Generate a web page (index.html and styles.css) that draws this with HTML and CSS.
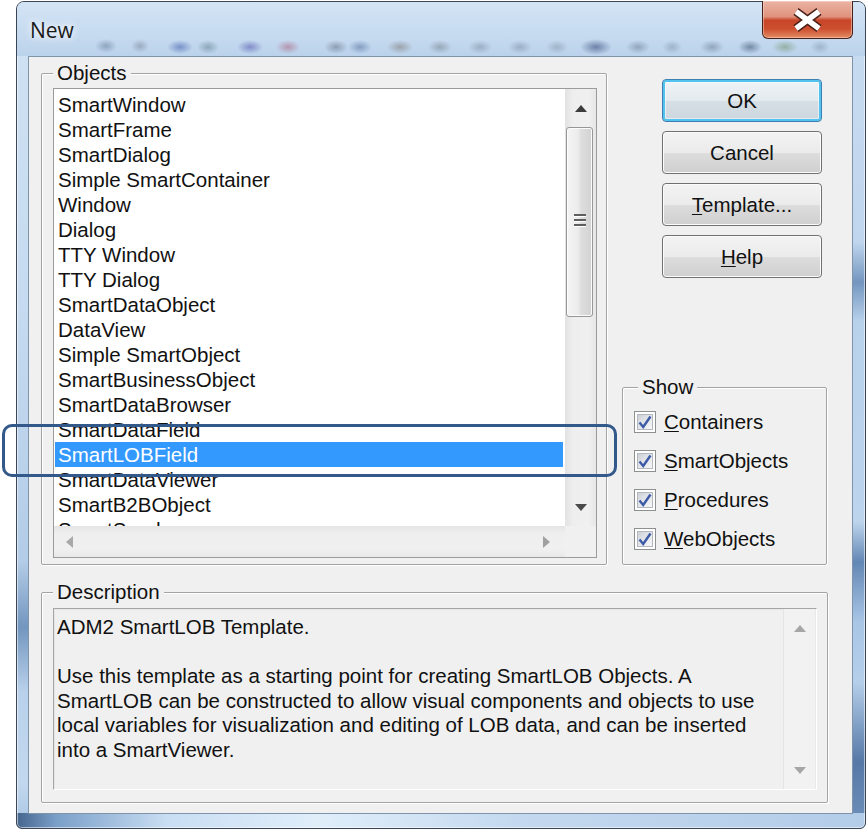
FILE: index.html
```html
<!DOCTYPE html>
<html>
<head>
<meta charset="utf-8">
<title>New</title>
<link rel="stylesheet" href="styles.css">
</head>
<body>
<div class="annot"></div>
<div class="window">
  <div class="titlebar">
    <span class="title">New</span>
    <div class="close">
      <svg width="89" height="37" viewBox="0 0 89 37">
        <path d="M33 10.5 L56 27.5 M56 10.5 L33 27.5" stroke="#4a2018" stroke-width="8.5" fill="none"/>
        <path d="M33 10.5 L56 27.5 M56 10.5 L33 27.5" stroke="#ffffff" stroke-width="5.5" fill="none"/>
      </svg>
    </div>
  </div>
  <div class="client">
    <div class="top">
      <div class="group objects">
        <div class="glabel">Objects</div>
        <div class="listbox">
          <ul class="items">
            <li>SmartWindow</li>
            <li>SmartFrame</li>
            <li>SmartDialog</li>
            <li>Simple SmartContainer</li>
            <li>Window</li>
            <li>Dialog</li>
            <li>TTY Window</li>
            <li>TTY Dialog</li>
            <li>SmartDataObject</li>
            <li>DataView</li>
            <li>Simple SmartObject</li>
            <li>SmartBusinessObject</li>
            <li>SmartDataBrowser</li>
            <li>SmartDataField</li>
            <li class="sel">SmartLOBField</li>
            <li>SmartDataViewer</li>
            <li>SmartB2BObject</li>
            <li>SmartSender</li>
          </ul>
          <div class="vscroll">
            <div class="varrow"><svg width="12" height="7" viewBox="0 0 12 7"><polygon points="0,7 6,0 12,7" fill="#3c3c3c"/></svg></div>
            <div class="thumb">
              <svg width="12" height="13" viewBox="0 0 12 13">
                <rect x="0" y="0" width="12" height="2" fill="#5e5e5e"/>
                <rect x="0" y="2" width="12" height="1" fill="#ffffff"/>
                <rect x="0" y="5" width="12" height="2" fill="#5e5e5e"/>
                <rect x="0" y="7" width="12" height="1" fill="#ffffff"/>
                <rect x="0" y="10" width="12" height="2" fill="#5e5e5e"/>
                <rect x="0" y="12" width="12" height="1" fill="#ffffff"/>
              </svg>
            </div>
            <div class="spacer"></div>
            <div class="varrow"><svg width="12" height="7" viewBox="0 0 12 7"><polygon points="0,0 12,0 6,7" fill="#4a4a4a"/></svg></div>
          </div>
          <div class="hscroll">
            <div class="harrow left"><svg width="7" height="12" viewBox="0 0 7 12"><polygon points="7,0 7,12 0,6" fill="#a8a8a8"/></svg></div>
            <div class="harrow right"><svg width="7" height="12" viewBox="0 0 7 12"><polygon points="0,0 7,6 0,12" fill="#a0a0a0"/></svg></div>
          </div>
          <div class="corner"></div>
        </div>
      </div>
      <div class="side">
        <div class="buttons">
          <div class="btn default">OK</div>
          <div class="btn">Cancel</div>
          <div class="btn"><span><u>T</u>emplate...</span></div>
          <div class="btn"><span><u>H</u>elp</span></div>
        </div>
        <div class="group show">
          <div class="glabel">Show</div>
          <div class="checks">
            <div class="check"><span class="box"><svg width="14" height="14" viewBox="0 0 14 14"><path d="M1.5 7.5 L5.2 12 L12.5 1.5" stroke="#3c5aa5" stroke-width="2.4" fill="none"/></svg></span><span><u>C</u>ontainers</span></div>
            <div class="check"><span class="box"><svg width="14" height="14" viewBox="0 0 14 14"><path d="M1.5 7.5 L5.2 12 L12.5 1.5" stroke="#3c5aa5" stroke-width="2.4" fill="none"/></svg></span><span><u>S</u>martObjects</span></div>
            <div class="check"><span class="box"><svg width="14" height="14" viewBox="0 0 14 14"><path d="M1.5 7.5 L5.2 12 L12.5 1.5" stroke="#3c5aa5" stroke-width="2.4" fill="none"/></svg></span><span><u>P</u>rocedures</span></div>
            <div class="check"><span class="box"><svg width="14" height="14" viewBox="0 0 14 14"><path d="M1.5 7.5 L5.2 12 L12.5 1.5" stroke="#3c5aa5" stroke-width="2.4" fill="none"/></svg></span><span><u>W</u>ebObjects</span></div>
          </div>
        </div>
      </div>
    </div>
    <div class="group desc">
      <div class="glabel">Description</div>
      <div class="textarea">
        <div class="dtext">ADM2 SmartLOB Template.<br><br>Use this template as a starting point for creating SmartLOB Objects. A<br>SmartLOB can be constructed to allow visual components and objects to use<br>local variables for visualization and editing of LOB data, and can be inserted<br>into a SmartViewer.</div>
        <div class="dscroll">
          <div class="varrow"><svg width="12" height="7" viewBox="0 0 12 7"><polygon points="0,7 6,0 12,7" fill="#a6a6a6"/></svg></div>
          <div class="varrow"><svg width="12" height="7" viewBox="0 0 12 7"><polygon points="0,0 12,0 6,7" fill="#a6a6a6"/></svg></div>
        </div>
      </div>
    </div>
  </div>
</div>
</body>
</html>
```

FILE: styles.css
```css
html, body {
  margin: 0;
  padding: 0;
}
body {
  width: 867px;
  height: 830px;
  background: #ffffff;
  position: relative;
  overflow: hidden;
  font-family: "Liberation Sans", Arial, sans-serif;
  font-size: 20.5px;
  color: #111;
}

.annot {
  position: absolute;
  left: 2px;
  top: 424px;
  width: 615px;
  height: 53px;
  box-sizing: border-box;
  border: 3px solid #33588a;
  border-radius: 10px;
  z-index: 5;
}

.window {
  box-sizing: border-box;
  width: 850px;
  height: 828px;
  margin: 1px 0 0 16px;
  border: 1px solid #3a4555;
  border-radius: 8px 8px 6px 6px;
  display: flex;
  flex-direction: column;
  box-shadow: inset 0 0 0 1px rgba(255, 255, 255, 0.55);
  background:
    linear-gradient(to right, #46668e 0, #7ba0c9 40px, #c9def3 150px, #e0eefa 300px, #c4d9ef 500px, #b3cce8 100%) left bottom / 100% 15px no-repeat,
    linear-gradient(to bottom, #c9dcf0 0, #c0d6ee 240px, #7396bf 280px, #b9d2ec 320px, #bcd4ec 520px, #6387b4 560px, #a9c6e6 620px, #b5cfea 680px, #5578a6 760px, #7093bc 828px) right top / 14px 100% no-repeat,
    linear-gradient(to bottom, #d0e2f3 0, #c6dbf0 300px, #b3cce7 560px, #7396bf 625px, #b9d1eb 690px, #c2d8ee 780px, #a8c4e3 828px) left top / 13px 100% no-repeat,
    #c2d8ee;
}

.titlebar {
  height: 54px;
  display: flex;
  align-items: flex-start;
  border-radius: 7px 7px 0 0;
  background:
    radial-gradient(ellipse 11px 7px at 89px 44px, rgba(70, 90, 120, 0.40), transparent),
    radial-gradient(ellipse 9px 7px at 123px 44px, rgba(90, 100, 120, 0.38), transparent),
    radial-gradient(ellipse 13px 7px at 163px 45px, rgba(60, 90, 170, 0.55), transparent),
    radial-gradient(ellipse 11px 7px at 191px 45px, rgba(80, 110, 120, 0.45), transparent),
    radial-gradient(ellipse 13px 7px at 233px 45px, rgba(80, 80, 170, 0.55), transparent),
    radial-gradient(ellipse 12px 7px at 271px 45px, rgba(170, 80, 110, 0.48), transparent),
    radial-gradient(ellipse 12px 7px at 319px 45px, rgba(80, 90, 110, 0.45), transparent),
    radial-gradient(ellipse 12px 7px at 343px 45px, rgba(60, 90, 140, 0.45), transparent),
    radial-gradient(ellipse 13px 7px at 383px 45px, rgba(110, 100, 90, 0.45), transparent),
    radial-gradient(ellipse 12px 7px at 423px 45px, rgba(90, 100, 110, 0.40), transparent),
    radial-gradient(ellipse 12px 7px at 463px 45px, rgba(90, 100, 120, 0.35), transparent),
    radial-gradient(ellipse 12px 7px at 503px 45px, rgba(90, 100, 120, 0.35), transparent),
    radial-gradient(ellipse 11px 7px at 540px 45px, rgba(90, 100, 120, 0.30), transparent),
    radial-gradient(ellipse 16px 8px at 579px 45px, rgba(40, 60, 110, 0.55), transparent),
    radial-gradient(ellipse 12px 7px at 621px 45px, rgba(80, 100, 120, 0.42), transparent),
    radial-gradient(ellipse 10px 7px at 655px 45px, rgba(80, 100, 120, 0.30), transparent),
    radial-gradient(ellipse 12px 7px at 695px 45px, rgba(80, 100, 120, 0.42), transparent),
    radial-gradient(ellipse 12px 7px at 733px 45px, rgba(50, 70, 100, 0.52), transparent),
    radial-gradient(ellipse 13px 7px at 768px 45px, rgba(110, 140, 100, 0.52), transparent),
    radial-gradient(ellipse 10px 7px at 803px 45px, rgba(90, 110, 130, 0.32), transparent),
    linear-gradient(to bottom, #d3e4f5 0%, #c4d9ef 70%, #bad2eb 100%);
}

.title {
  font-family: "Open Sans", "Noto Sans", sans-serif;
  font-size: 21px;
  line-height: 28px;
  margin: 14px 0 0 13px;
  color: #1a1a1a;
  text-shadow: 0 0 6px rgba(255, 255, 255, 0.9), 0 0 10px rgba(255, 255, 255, 0.7);
}

.close {
  margin: -1px 12px 0 auto;
  width: 91px;
  height: 38px;
  box-sizing: border-box;
  border: 1px solid #47201a;
  border-top: none;
  border-radius: 0 0 6px 6px;
  background: linear-gradient(to bottom, #ebb3a4 0%, #e0937e 42%, #c84528 52%, #cc4f30 75%, #e48c62 100%);
  box-shadow: inset 0 0 0 1px rgba(255, 230, 220, 0.45);
  display: flex;
  align-items: center;
  justify-content: center;
  overflow: hidden;
}
.close svg {
  display: block;
}

.client {
  box-sizing: border-box;
  margin: 0 12px 0 11px;
  width: 825px;
  height: 758px;
  border: 1px solid #7f93aa;
  background: #f0f0f0;
  padding: 16px 24px 0 12px;
}

.top {
  display: flex;
  height: 492px;
}

.group {
  box-sizing: border-box;
  border: 1px solid #a3a3a3;
  border-radius: 2px;
  box-shadow: inset 1px 1px 0 #ffffff, 1px 1px 0 #ffffff;
}

.glabel {
  width: max-content;
  margin: -13px 0 0 0;
  padding: 0 4px;
  line-height: 24px;
  background: #f0f0f0;
}

.objects {
  width: 566px;
  height: 492px;
  padding-left: 11px;
}

.listbox {
  box-sizing: border-box;
  width: 544px;
  height: 470px;
  margin-top: 3px;
  border: 1px solid #9b9b9b;
  display: grid;
  grid-template-columns: 1fr 31px;
  grid-template-rows: 1fr 31px;
  background: #ffffff;
}

.items {
  margin: 0;
  padding: 3px 2px 0 1px;
  list-style: none;
  overflow: hidden;
  min-height: 0;
}
.items li {
  height: 25px;
  line-height: 25px;
  padding-left: 3px;
  white-space: nowrap;
}
.items li.sel {
  background: #3399ff;
  color: #ffffff;
}

.vscroll {
  display: flex;
  flex-direction: column;
  background: linear-gradient(to right, #e2e2e2 0, #eeeeee 25%, #f0f0f0 75%, #e6e6e6 100%);
  min-height: 0;
}
.varrow {
  height: 38px;
  display: flex;
  align-items: center;
  justify-content: center;
  flex: none;
}
.varrow svg {
  display: block;
}
.thumb {
  margin: 0 3px 0 1px;
  height: 190px;
  box-sizing: border-box;
  border: 1px solid #979797;
  border-radius: 3px;
  background: linear-gradient(to right, #f4f4f4 0%, #ececec 45%, #dedede 55%, #d2d2d2 100%);
  box-shadow: inset 0 0 0 1px #fbfbfb;
  display: flex;
  align-items: center;
  justify-content: center;
  flex: none;
}
.thumb svg {
  display: block;
  margin-top: -4px;
}
.spacer {
  flex: 1;
}

.hscroll {
  display: flex;
  justify-content: space-between;
  background: linear-gradient(to bottom, #e4e4e4 0, #efefef 25%, #f0f0f0 75%, #e8e8e8 100%);
}
.harrow {
  display: flex;
  align-items: center;
  justify-content: center;
}
.harrow.left {
  width: 30px;
}
.harrow.right {
  width: 38px;
}
.harrow svg {
  display: block;
}
.corner {
  background: #f0f0f0;
}

.side {
  margin-left: 15px;
  width: 205px;
  display: flex;
  flex-direction: column;
}

.buttons {
  margin: 6px 0 0 40px;
  display: flex;
  flex-direction: column;
  gap: 9px;
}
.btn {
  width: 160px;
  height: 43px;
  box-sizing: border-box;
  border: 1px solid #707070;
  border-radius: 4px;
  background: linear-gradient(to bottom, #f3f3f3 0%, #ebebeb 50%, #dddddd 51%, #cfcfcf 100%);
  box-shadow: inset 0 0 0 1px #fcfcfc;
  display: flex;
  align-items: center;
  justify-content: center;
  color: #111;
}
.btn.default {
  border-color: #3c7fb1;
  background: linear-gradient(to bottom, #eef3f6 0%, #e4ebef 50%, #d6dfe5 51%, #ccd6de 100%);
  box-shadow: inset 0 0 0 2px #52c3ef, inset 0 0 0 3px rgba(255, 255, 255, 0.5);
}
u {
  text-decoration: underline;
  text-underline-offset: 2px;
  text-decoration-thickness: 1px;
}

.show {
  margin-top: auto;
  height: 178px;
  padding-left: 11px;
}
.show .glabel {
  margin-left: 4px;
}
.checks {
  margin-top: 3px;
}
.check {
  height: 39px;
  display: flex;
  align-items: center;
  gap: 8px;
}
.box {
  width: 22px;
  height: 22px;
  box-sizing: border-box;
  border: 1px solid #8e8f8f;
  background: #ffffff;
  padding: 2px;
  display: flex;
  flex: none;
}
.box svg {
  display: block;
  width: 16px;
  height: 16px;
  box-sizing: border-box;
  border: 1px solid #b3b8bf;
  background: linear-gradient(135deg, #cdd1d7 0%, #e8eaed 60%, #f7f7f7 100%);
  padding: 0;
}

.desc {
  margin-top: 27px;
  width: 787px;
  height: 211px;
  padding-left: 11px;
}
.textarea {
  margin-top: 4px;
  width: 764px;
  height: 182px;
  box-sizing: border-box;
  border: 1px solid;
  border-color: #a6a6a6 #ffffff #ffffff #a6a6a6;
  box-shadow: inset 1px 1px 0 #e6e6e6;
  display: grid;
  grid-template-columns: 1fr 33px;
  background: #f0f0f0;
}
.dtext {
  padding: 6px 0 0 3px;
  line-height: 24.5px;
  white-space: nowrap;
  overflow: hidden;
}
.dscroll {
  display: flex;
  flex-direction: column;
  justify-content: space-between;
  border-left: 1px solid #e4e4e4;
  border-right: 1px solid #e8e8e8;
  background: #f2f2f2;
}
```
